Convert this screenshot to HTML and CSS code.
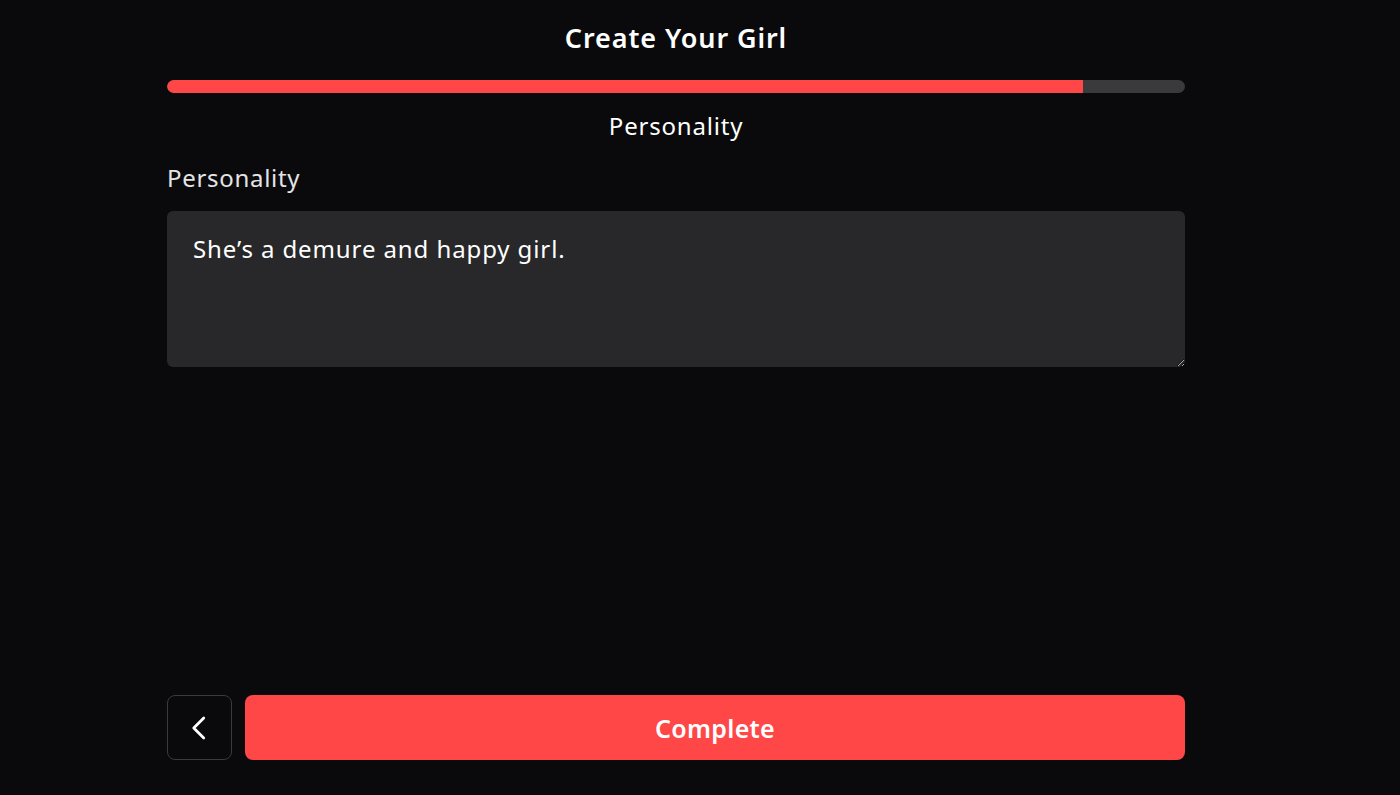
FILE: index.html
```html
<!DOCTYPE html>
<html lang="en">
<head>
    <meta charset="UTF-8">
    <meta name="viewport" content="width=device-width, initial-scale=1.0">
    <title>Create Your Girl</title>
    <link rel="stylesheet" href="styles.css">
</head>
<body>
    <div class="wizard">
        <h1 class="title">Create Your Girl</h1>
        <div class="progress">
            <div class="progress-fill" style="width: 90%"></div>
        </div>
        <div class="step-name">Personality</div>

        <label class="field-label" for="personality">Personality</label>
        <textarea id="personality" class="field-input">She’s a demure and happy girl.</textarea>

        <div class="actions">
            <button class="back-btn" aria-label="Back">
                <svg width="30" height="30" viewBox="0 0 24 24" fill="none" stroke="#fff" stroke-width="2.2" stroke-linecap="round" stroke-linejoin="round">
                    <path d="M15 4 L7 12 L15 20"/>
                </svg>
            </button>
            <button class="complete-btn">Complete</button>
        </div>
    </div>
</body>
</html>
```

FILE: styles.css
```css
* {
    box-sizing: border-box;
}

body {
    margin: 0;
    height: 100vh;
    background: #0a0a0c;
    color: #fff;
    font-family: 'Noto Sans', 'Open Sans', sans-serif;
    overflow: hidden;
}

.wizard {
    width: 1018px;
    height: 100%;
    margin-left: 167px;
    padding: 20px 0 35px;
    display: flex;
    flex-direction: column;
}

.title {
    margin: 0;
    font-size: 27px;
    font-weight: 600;
    letter-spacing: 0.9px;
    text-align: center;
    line-height: 36px;
}

.progress {
    margin-top: 24px;
    height: 13px;
    background: #3a3a3c;
    border-radius: 7px;
    overflow: hidden;
}

.progress-fill {
    height: 100%;
    background: #ff4747;
    border-radius: 7px 0 0 7px;
}

.step-name {
    margin-top: 17px;
    font-size: 24px;
    letter-spacing: 0.8px;
    text-align: center;
    line-height: 32px;
}

.field-label {
    margin-top: 20px;
    font-size: 24px;
    letter-spacing: 0.7px;
    color: #e4e4e4;
    line-height: 32px;
}

.field-input {
    margin-top: 17px;
    height: 156px;
    padding: 22px 26px;
    background: #28282a;
    color: #fff;
    border: none;
    border-radius: 6px;
    font-family: inherit;
    font-size: 24px;
    letter-spacing: 0.9px;
    line-height: 32px;
    outline: none;
}

.actions {
    margin-top: auto;
    display: flex;
    gap: 13px;
    height: 65px;
}

.back-btn {
    width: 65px;
    flex-shrink: 0;
    background: transparent;
    border: 1px solid #3a3a3c;
    border-radius: 8px;
    display: flex;
    align-items: center;
    justify-content: center;
    cursor: pointer;
}

.complete-btn {
    flex: 1;
    background: #ff4747;
    color: #fff;
    border: none;
    border-radius: 8px;
    font-family: inherit;
    font-size: 25px;
    font-weight: 600;
    letter-spacing: 0.3px;
    cursor: pointer;
}
```
